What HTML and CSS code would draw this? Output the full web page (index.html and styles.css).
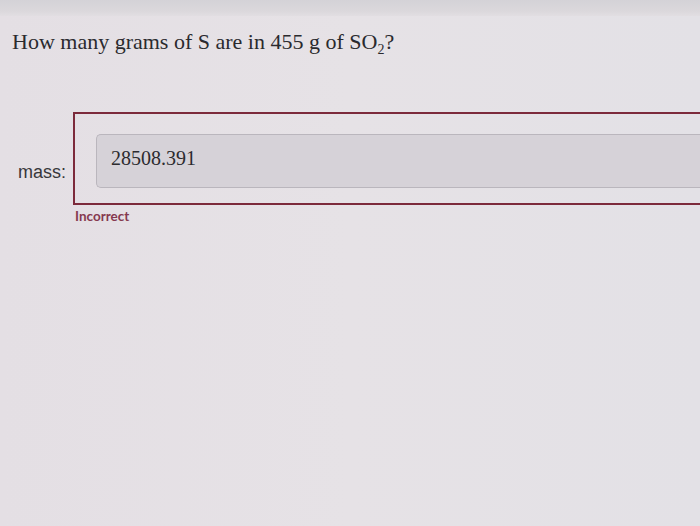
FILE: index.html
```html
<!DOCTYPE html>
<html>
<head>
<meta charset="utf-8">
<link rel="stylesheet" href="styles.css">
</head>
<body>
<div class="page">
  <div class="topband"></div>
  <p class="question">How many grams of S are in 455 g of SO<sub>2</sub>?</p>
  <div class="answer-row">
    <span class="label">mass:</span>
    <div class="field">
      <div class="box">
        <div class="input">28508.391</div>
      </div>
      <div class="feedback">Incorrect</div>
    </div>
  </div>
</div>
</body>
</html>
```
FILE: styles.css
```css
html, body {
  margin: 0;
  padding: 0;
  width: 700px;
  height: 526px;
  overflow: hidden;
}
body {
  background: linear-gradient(90deg, #e4dfe4 0%, #e6e2e6 50%, #e3e1e6 100%);
}
.page {
  width: 700px;
  height: 526px;
}
.topband {
  height: 16px;
  background: linear-gradient(180deg, #d4d2d7 0%, #dbd8dc 70%, #e2dee2 100%);
}
.question {
  margin: 12px 0 0 12px;
  font-family: "Liberation Serif", serif;
  font-size: 22px;
  line-height: 28px;
  color: #2a2a2e;
}
.question sub {
  font-size: 14px;
  vertical-align: -5px;
  line-height: 0;
}
.answer-row {
  display: flex;
  align-items: flex-start;
  margin-top: 56px;
}
.label {
  flex: 0 0 55px;
  padding-left: 18px;
  margin-top: 50px;
  font-family: "Liberation Sans", sans-serif;
  font-size: 18px;
  color: #38373b;
}
.field {
  flex: 1 1 auto;
}
.box {
  border: 2px solid #7c2a3b;
  border-right: none;
  padding: 20px 0 15px 21px;
}
.input {
  height: 54px;
  box-sizing: border-box;
  background: #d6d2d8;
  border: 1px solid #bab6bd;
  border-right: none;
  border-radius: 5px 0 0 5px;
  padding: 12px 0 0 14px;
  font-family: "Liberation Serif", serif;
  font-size: 20px;
  color: #2c2b2f;
}
.feedback {
  margin: 3px 0 0 2px;
  font-family: Lato, sans-serif;
  font-weight: bold;
  font-size: 13.5px;
  color: #86394f;
}
```
